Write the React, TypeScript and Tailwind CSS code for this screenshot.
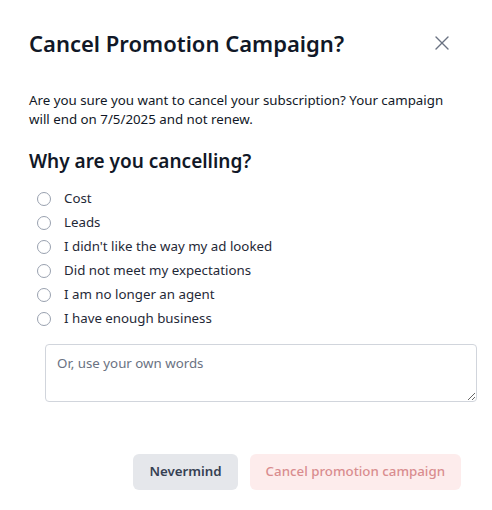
import { X } from "lucide-react";

const reasons = [
  "Cost",
  "Leads",
  "I didn't like the way my ad looked",
  "Did not meet my expectations",
  "I am no longer an agent",
  "I have enough business",
];

export default function App() {
  return (
    <div
      className="w-[492px] h-[510px] bg-white pl-[29px] pr-[15px] pt-[28px] text-[#111827]"
      style={{ fontFamily: '"Noto Sans", "Open Sans", sans-serif' }}
    >
      <div className="flex items-center justify-between h-[30px]">
        <h2 className="text-[22px] font-semibold leading-[30px] text-[#111827]">
          Cancel Promotion Campaign?
        </h2>
        <button className="mr-[23px] text-gray-500">
          <X className="w-[24px] h-[24px]" strokeWidth={1.4} />
        </button>
      </div>

      <p className="mt-[33px] pr-[30px] text-[13.3px] leading-[19px] text-[#111827]">
        Are you sure you want to cancel your subscription? Your campaign will end on 7/5/2025 and not renew.
      </p>

      <h3 className="mt-[19px] text-[19px] font-semibold leading-[26px]">Why are you cancelling?</h3>

      <div className="mt-[13px] flex flex-col">
        {reasons.map((r) => (
          <label key={r} className="flex items-center h-[24px] pl-[8px] gap-[13px] text-[13.3px] text-[#1f2937]">
            <span className="w-[14px] h-[14px] rounded-full border border-gray-400 bg-white" />
            {r}
          </label>
        ))}
      </div>

      <textarea
        placeholder="Or, use your own words"
        className="mt-[13px] ml-[16px] block w-[432px] h-[58px] rounded-[4px] border border-gray-300 px-[11px] py-[8px] text-[13.3px] leading-[20px] placeholder:text-gray-500 outline-none"
      />

      <div className="mt-[52px] flex justify-end gap-[12px] mr-[16px]">
        <button className="h-[36px] px-[16px] rounded-[6px] bg-gray-200 text-[13.3px] font-semibold text-gray-700">
          Nevermind
        </button>
        <button className="h-[36px] px-[16px] rounded-[6px] bg-[#fdecec] text-[13.3px] font-medium text-[#d98c8f]">
          Cancel promotion campaign
        </button>
      </div>
    </div>
  );
}
